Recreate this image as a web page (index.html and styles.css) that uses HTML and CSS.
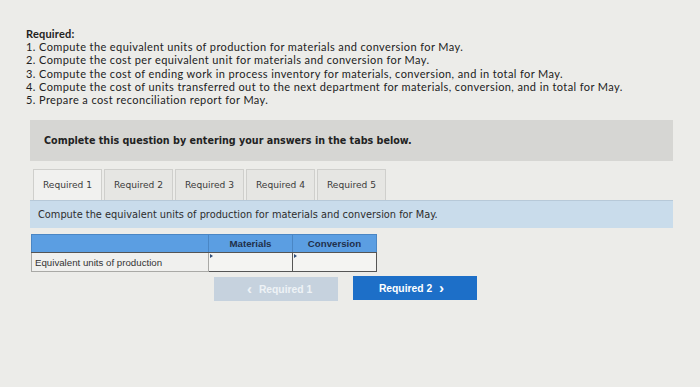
FILE: index.html
```html
<!DOCTYPE html>
<html>
<head>
    <meta charset="UTF-8">
    <meta name="viewport" content="width=device-width, initial-scale=1.0">
    <title>Required</title>
    <link rel="stylesheet" href="styles.css">
</head>
<body>
    <div class="page">
        <div class="requirements">
            <div class="req-title">Required:</div>
            <div>1. Compute the equivalent units of production for materials and conversion for May.</div>
            <div>2. Compute the cost per equivalent unit for materials and conversion for May.</div>
            <div>3. Compute the cost of ending work in process inventory for materials, conversion, and in total for May.</div>
            <div>4. Compute the cost of units transferred out to the next department for materials, conversion, and in total for May.</div>
            <div>5. Prepare a cost reconciliation report for May.</div>
        </div>

        <div class="notice">Complete this question by entering your answers in the tabs below.</div>

        <div class="tabs">
            <div class="tab active">Required 1</div>
            <div class="tab">Required 2</div>
            <div class="tab">Required 3</div>
            <div class="tab">Required 4</div>
            <div class="tab">Required 5</div>
        </div>

        <div class="instruction">Compute the equivalent units of production for materials and conversion for May.</div>

        <table class="answer-table">
            <tr class="head">
                <th class="label-col"></th>
                <th>Materials</th>
                <th>Conversion</th>
            </tr>
            <tr>
                <td class="label-col">Equivalent units of production</td>
                <td class="input-cell"><span class="marker"></span></td>
                <td class="input-cell"><span class="marker"></span></td>
            </tr>
        </table>

        <div class="nav">
            <div class="nav-btn prev"><span class="chev">&lsaquo;</span> Required 1</div>
            <div class="nav-btn next">Required 2 <span class="chev">&rsaquo;</span></div>
        </div>
    </div>
</body>
</html>
```

FILE: styles.css
```css
* {
    box-sizing: border-box;
    margin: 0;
    padding: 0;
}

body {
    background-color: #ecece9;
    font-family: Lato, "Liberation Sans", Arial, sans-serif;
    color: #222;
}

.page {
    padding: 27px 26px 0 26px;
}

.requirements {
    font-size: 11px;
    line-height: 13.2px;
    letter-spacing: 0.4px;
}

.req-title {
    font-weight: bold;
    letter-spacing: 0.2px;
}

.notice {
    margin: 14px 0 0 4px;
    width: 643px;
    height: 41px;
    background: #d6d6d3;
    font-family: "DejaVu Sans", Verdana, sans-serif;
    font-weight: bold;
    font-size: 9.6px;
    color: #222;
    padding: 15px 0 0 14px;
}

.tabs {
    display: flex;
    gap: 2px;
    margin: 8px 0 0 7px;
    height: 31px;
}

.tab {
    width: 69px;
    border: 1px solid #cfcfcc;
    border-bottom: none;
    background: #e6e6e3;
    font-family: "DejaVu Sans", Verdana, sans-serif;
    font-size: 9.1px;
    color: #3a3a3a;
    display: flex;
    align-items: center;
    justify-content: center;
}

.tab.active {
    background: #f1f1ef;
}

.instruction {
    margin-left: 4px;
    width: 643px;
    height: 28px;
    background: #c9dceb;
    border-top: 1px solid #b7c9d8;
    font-family: "DejaVu Sans", Verdana, sans-serif;
    font-size: 9.8px;
    color: #2d2d2d;
    padding: 8px 0 0 8px;
}

.answer-table {
    margin: 6px 0 0 5px;
    border-collapse: collapse;
    font-family: "Liberation Sans", Arial, sans-serif;
    font-size: 9.7px;
}

.answer-table th {
    background: #5b9ee2;
    color: #1f2f4a;
    font-weight: bold;
    height: 18px;
    width: 84px;
    border: 1px solid #4a86c4;
    border-bottom: 1px solid #555;
}

.answer-table th.label-col {
    width: 177px;
}

.answer-table td {
    height: 19px;
}

.answer-table td.label-col {
    border: 1px solid #a9a9a6;
    background: #f0f0ee;
    color: #333;
    padding-left: 3px;
    width: 177px;
}

.input-cell {
    position: relative;
    border: 1.5px solid #555;
    background: #f4f4f2;
    width: 84px;
}

.marker {
    position: absolute;
    top: 1px;
    left: 1px;
    width: 0;
    height: 0;
    border-top: 2.5px solid transparent;
    border-bottom: 2.5px solid transparent;
    border-left: 3px solid #2f4e7a;
}

.nav {
    display: flex;
    gap: 15px;
    margin: 4px 0 0 188px;
}

.nav-btn {
    width: 124px;
    height: 24px;
    font-family: "Liberation Sans", Arial, sans-serif;
    font-weight: bold;
    font-size: 10.3px;
    color: #fff;
    display: flex;
    align-items: center;
    justify-content: center;
}

.nav-btn .chev {
    font-size: 15px;
    line-height: 1;
    margin: 0 7px;
    position: relative;
    top: -1px;
}

.prev {
    background: #c6d2de;
    color: #eef2f6;
    margin-top: 1px;
}

.next {
    background: #1d6fc8;
}
```
